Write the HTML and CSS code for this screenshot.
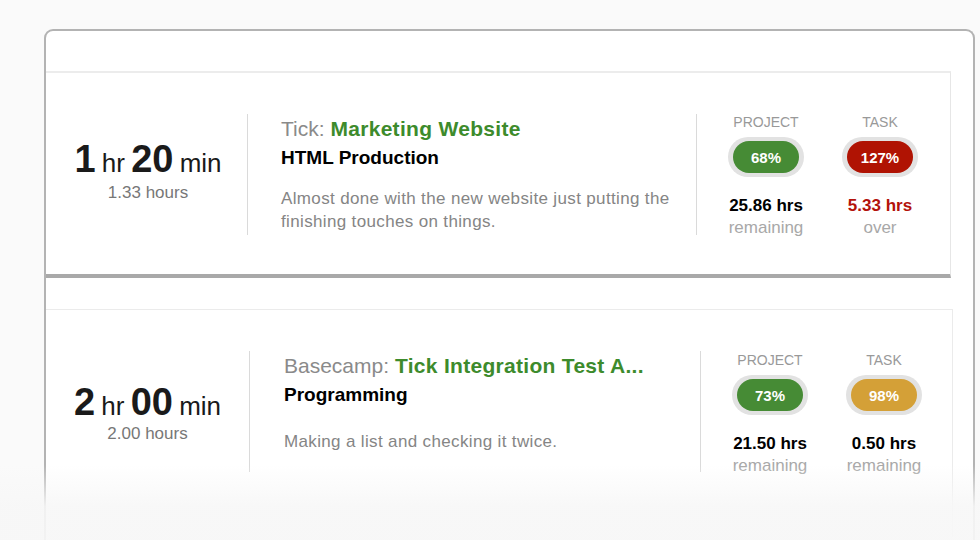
FILE: index.html
```html
<!DOCTYPE html>
<html>
<head>
<meta charset="utf-8">
<link rel="stylesheet" href="styles.css">
</head>
<body>
<div class="frame">
  <div class="entry entry--first">
    <div class="time">
      <div class="time-main"><b>1</b> hr <b>20</b> min</div>
      <div class="time-sub">1.33 hours</div>
    </div>
    <div class="divider"></div>
    <div class="details">
      <div class="project"><span class="source">Tick:</span> <span class="project-name">Marketing Website</span></div>
      <div class="task">HTML Production</div>
      <p class="note">Almost done with the new website just putting the finishing touches on things.</p>
    </div>
    <div class="divider"></div>
    <div class="stats">
      <div class="stat">
        <div class="stat-label">PROJECT</div>
        <div class="pill"><span class="pill-inner pill--green">68%</span></div>
        <div class="stat-value">25.86 hrs</div>
        <div class="stat-sub">remaining</div>
      </div>
      <div class="stat">
        <div class="stat-label">TASK</div>
        <div class="pill"><span class="pill-inner pill--red">127%</span></div>
        <div class="stat-value stat-value--over">5.33 hrs</div>
        <div class="stat-sub">over</div>
      </div>
    </div>
  </div>

  <div class="entry entry--second">
    <div class="time">
      <div class="time-main"><b>2</b> hr <b>00</b> min</div>
      <div class="time-sub">2.00 hours</div>
    </div>
    <div class="divider"></div>
    <div class="details">
      <div class="project"><span class="source">Basecamp:</span> <span class="project-name">Tick Integration Test A...</span></div>
      <div class="task">Programming</div>
      <p class="note">Making a list and checking it twice.</p>
    </div>
    <div class="divider"></div>
    <div class="stats">
      <div class="stat">
        <div class="stat-label">PROJECT</div>
        <div class="pill"><span class="pill-inner pill--green">73%</span></div>
        <div class="stat-value">21.50 hrs</div>
        <div class="stat-sub">remaining</div>
      </div>
      <div class="stat">
        <div class="stat-label">TASK</div>
        <div class="pill"><span class="pill-inner pill--gold">98%</span></div>
        <div class="stat-value">0.50 hrs</div>
        <div class="stat-sub">remaining</div>
      </div>
    </div>
  </div>
</div>
<div class="fade"></div>
</body>
</html>
```
FILE: styles.css
```css
html, body {
  margin: 0;
  padding: 0;
}
body {
  position: relative;
  width: 980px;
  height: 540px;
  overflow: hidden;
  background: #fafafa;
  font-family: "Liberation Sans", Arial, Helvetica, sans-serif;
  color: #000;
}
.frame {
  margin: 29px 0 0 44px;
  width: 927px;
  height: 560px;
  padding-top: 40px;
  background: #fff;
  border: 2px solid #b3b3b3;
  border-bottom: none;
  border-radius: 9px 9px 0 0;
}
.entry {
  display: flex;
  align-items: flex-start;
  background: #fff;
  padding-top: 41px;
}
.entry--first {
  margin-right: 22px;
  border-top: 2px solid #ececec;
  border-right: 1px solid #e6e6e6;
  border-bottom: 4px solid #a9a9a9;
  padding-bottom: 35px;
}
.entry--second {
  margin-top: 31px;
  margin-right: 20px;
  border-top: 1px solid #ebebeb;
  border-right: 1px solid #ebebeb;
  padding-bottom: 60px;
}
.divider {
  flex: none;
  width: 1px;
  height: 121px;
  background: #dadada;
}
.time {
  flex: none;
  width: 201px;
  padding: 25px 0 0 3px;
  box-sizing: border-box;
  text-align: center;
}
.entry--second .time {
  width: 203px;
  padding: 31px 0 0 0;
}
.time-main {
  font-size: 26px;
  line-height: 41px;
  color: #1a1a1a;
  white-space: nowrap;
  word-spacing: -1px;
}
.time-main b {
  font-size: 38px;
  font-weight: bold;
}
.time-sub {
  margin-top: -2px;
  font-size: 17px;
  line-height: 22px;
  color: #777;
}
.entry--second .time-sub {
  margin-top: -4px;
}
.details {
  flex: none;
  width: 415px;
  padding: 3px 0 0 33px;
}
.entry--second .details {
  width: 416px;
  padding-left: 34px;
}
.project {
  font-size: 21px;
  line-height: 24px;
  white-space: nowrap;
}
.source {
  color: #8a8a8a;
}
.project-name {
  color: #3d8b2c;
  font-weight: bold;
  letter-spacing: 0.3px;
}
.task {
  margin-top: 6px;
  font-size: 19px;
  line-height: 22px;
  font-weight: bold;
  color: #000;
}
.note {
  margin: 18px 0 0;
  font-size: 17px;
  line-height: 23px;
  letter-spacing: 0.35px;
  color: #858585;
}
.entry--second .note {
  margin-top: 24px;
}
.stats {
  flex: none;
  display: flex;
  gap: 38px;
  padding-left: 31px;
}
.entry--second .stats {
  padding-top: 1px;
}
.stat {
  width: 76px;
  display: flex;
  flex-direction: column;
  align-items: center;
  text-align: center;
  white-space: nowrap;
}
.stat-label {
  font-size: 14px;
  line-height: 16px;
  color: #999;
}
.pill {
  margin-top: 7px;
  width: 76px;
  height: 40px;
  box-sizing: border-box;
  padding: 4px 5px;
  border-radius: 20px;
  background: #e2e2e2;
}
.pill-inner {
  display: flex;
  align-items: center;
  justify-content: center;
  height: 100%;
  border-radius: 16px;
  color: #fff;
  font-size: 15px;
  font-weight: bold;
}
.pill--green { background: #468b35; }
.pill--red { background: #b01303; }
.pill--gold { background: #d4a037; }
.stat-value {
  margin-top: 18px;
  font-size: 17px;
  line-height: 22px;
  font-weight: bold;
  color: #000;
}
.stat-value--over {
  color: #b3120b;
}
.stat-sub {
  font-size: 17px;
  line-height: 22px;
  color: #a8a8a8;
}
.fade {
  position: absolute;
  left: 0;
  right: 0;
  bottom: 0;
  height: 75px;
  background: linear-gradient(to bottom, rgba(248, 248, 248, 0) 0%, rgba(247, 247, 247, 0.9) 55%, rgba(247, 247, 247, 0.93) 100%);
}
```
